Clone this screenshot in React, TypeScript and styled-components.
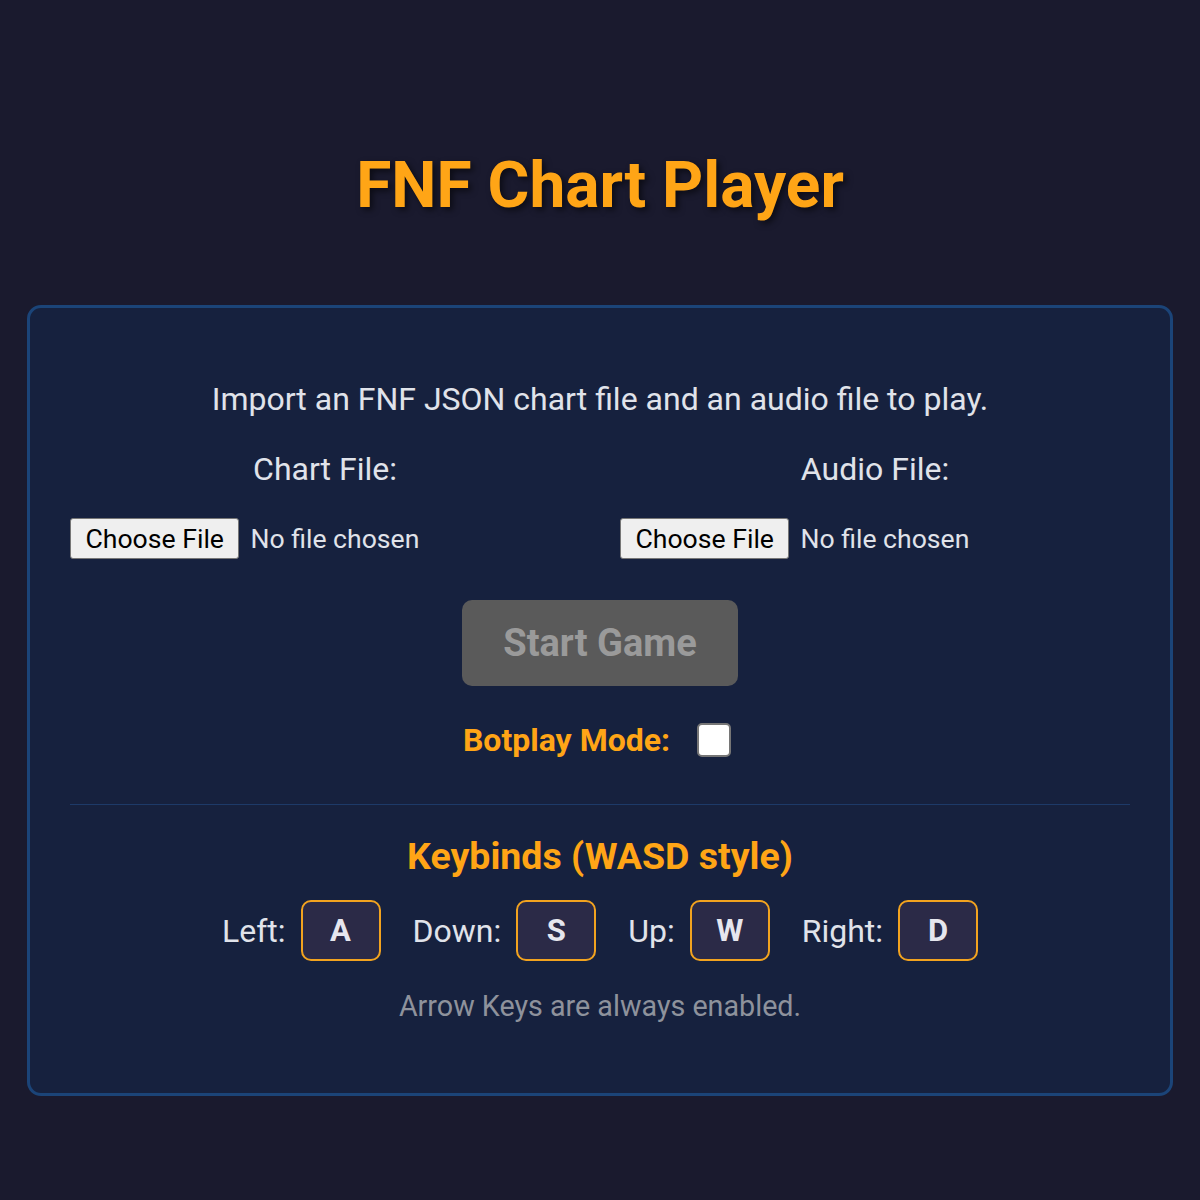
import React from "react";
import styled, { createGlobalStyle } from "styled-components";

const Global = createGlobalStyle`
  html, body {
    margin: 0;
    padding: 0;
    background: #1a1a2e;
    font-family: Roboto, "Liberation Sans", sans-serif;
    color: #e0e3ea;
  }
  * { box-sizing: border-box; }
`;

const Page = styled.div`
  min-height: 1200px;
  padding: 147px 27px 0;
  display: flex;
  flex-direction: column;
  align-items: stretch;
`;

const Title = styled.h1`
  margin: 0;
  text-align: center;
  font-size: 64px;
  line-height: 77px;
  font-weight: 700;
  color: #ffa516;
  text-shadow: 3px 3px 6px rgba(0, 0, 0, 0.55);
`;

const Card = styled.main`
  margin-top: 81px;
  background: #16213e;
  border: 3px solid #1b4478;
  border-radius: 14px;
  padding: 71px 40px 69px;
  display: flex;
  flex-direction: column;
  align-items: center;
`;

const Intro = styled.p`
  margin: 0;
  font-size: 32px;
  line-height: 40px;
  text-align: center;
`;

const Columns = styled.div`
  align-self: stretch;
  margin-top: 30px;
  display: grid;
  grid-template-columns: 1fr 1fr;
  column-gap: 40px;
`;

const Column = styled.div`
  display: flex;
  flex-direction: column;
  gap: 29px;
`;

const FieldLabel = styled.label`
  font-size: 32px;
  line-height: 40px;
  text-align: center;
`;

const FileInput = styled.input`
  font-family: Roboto, "Liberation Sans", sans-serif;
  font-size: 26.6px;
  color: #e0e3ea;
  height: 41px;
  &::file-selector-button {
    font-family: Roboto, "Liberation Sans", sans-serif;
    font-size: 26.6px;
    color: #000;
    background: #efefef;
    border: 1.5px solid #767676;
    border-radius: 3px;
    padding: 3px 14.5px;
    height: 41px;
    margin-right: 11px;
  }
`;

const StartButton = styled.button`
  margin-top: 41px;
  width: 276px;
  height: 86px;
  border: none;
  border-radius: 10px;
  background: #5a5a5a;
  color: #9a9a9a;
  font-family: Roboto, "Liberation Sans", sans-serif;
  font-size: 38px;
  font-weight: 700;
`;

const BotRow = styled.div`
  margin-top: 34px;
  height: 40px;
  display: flex;
  align-items: center;
  gap: 27px;
  padding-right: 6px;
`;

const BotLabel = styled.label`
  font-size: 32px;
  font-weight: 700;
  color: #ffa516;
`;

const Check = styled.input`
  appearance: none;
  margin: 0;
  width: 34px;
  height: 34px;
  background: #fff;
  border: 2px solid #767676;
  border-radius: 5px;
`;

const Divider = styled.hr`
  align-self: stretch;
  margin: 44px 0 0;
  border: none;
  border-top: 1.5px solid #1d3a68;
`;

const Heading = styled.h2`
  margin: 29px 0 0;
  font-size: 37.5px;
  line-height: 44px;
  font-weight: 700;
  color: #ffa516;
`;

const KeyRow = styled.div`
  margin-top: 22px;
  display: flex;
  align-items: center;
  gap: 32px;
`;

const KeyGroup = styled.div`
  display: flex;
  align-items: center;
  gap: 15px;
`;

const KeyLabel = styled.span`
  font-size: 32px;
`;

const KeyBox = styled.div`
  width: 80px;
  height: 61px;
  border: 2px solid #f2a31f;
  border-radius: 10px;
  background: #2b2a47;
  display: flex;
  align-items: center;
  justify-content: center;
  font-size: 31px;
  font-weight: 700;
  color: #e6e6ee;
`;

const Note = styled.p`
  margin: 27px 0 0;
  font-size: 28.7px;
  line-height: 36px;
  color: #8e929c;
`;

const keys = [
  { label: "Left:", key: "A" },
  { label: "Down:", key: "S" },
  { label: "Up:", key: "W" },
  { label: "Right:", key: "D" },
];

export default function App() {
  return (
    <>
      <Global />
      <Page>
        <Title>FNF Chart Player</Title>
        <Card>
          <Intro>Import an FNF JSON chart file and an audio file to play.</Intro>
          <Columns>
            <Column>
              <FieldLabel htmlFor="chart">Chart File:</FieldLabel>
              <FileInput id="chart" type="file" accept=".json" />
            </Column>
            <Column>
              <FieldLabel htmlFor="audio">Audio File:</FieldLabel>
              <FileInput id="audio" type="file" accept="audio/*" />
            </Column>
          </Columns>
          <StartButton disabled>Start Game</StartButton>
          <BotRow>
            <BotLabel htmlFor="bot">Botplay Mode:</BotLabel>
            <Check id="bot" type="checkbox" />
          </BotRow>
          <Divider />
          <Heading>Keybinds (WASD style)</Heading>
          <KeyRow>
            {keys.map((k) => (
              <KeyGroup key={k.key}>
                <KeyLabel>{k.label}</KeyLabel>
                <KeyBox>{k.key}</KeyBox>
              </KeyGroup>
            ))}
          </KeyRow>
          <Note>Arrow Keys are always enabled.</Note>
        </Card>
      </Page>
    </>
  );
}
